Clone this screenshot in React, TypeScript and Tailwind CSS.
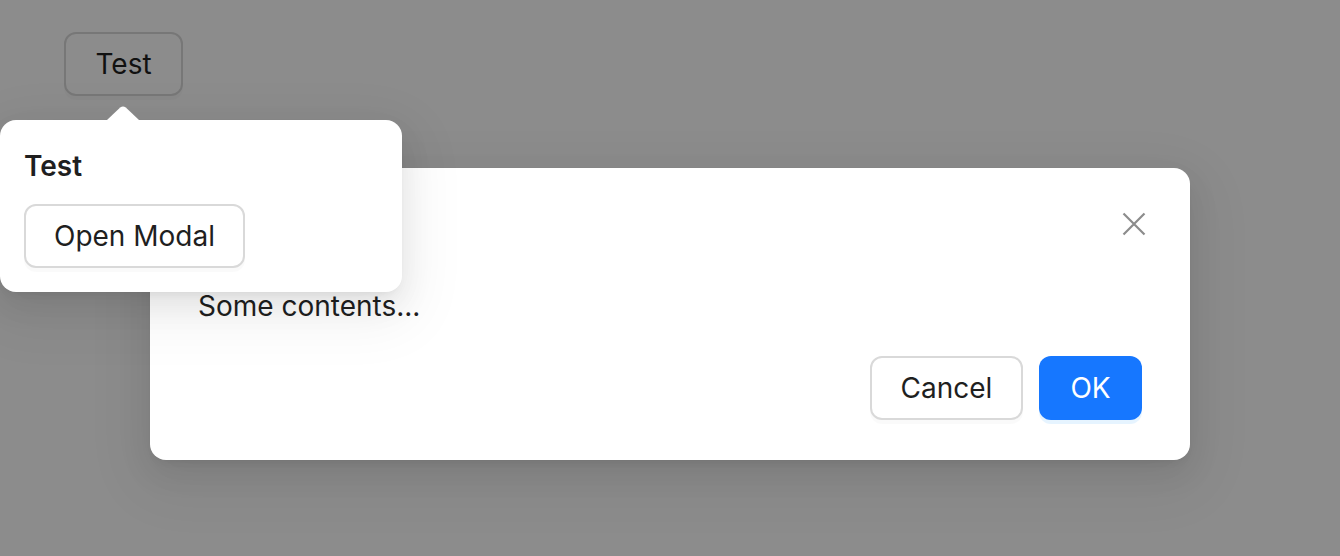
import React from "react";

export default function App() {
  return (
    <div
      className="relative w-[1340px] h-[556px] overflow-hidden bg-white text-[#1f1f1f]"
      style={{ fontFamily: "Inter, 'Noto Sans', sans-serif" }}
    >
      <div className="pt-[32px] pl-[64px]">
        <button className="w-[119px] h-[64px] rounded-[12px] border-2 border-[#d9d9d9] bg-white text-[28px] leading-[44px] shadow-[0_4px_0_rgba(0,0,0,0.02)]">
          Test
        </button>
      </div>

      {/* mask */}
      <div className="absolute inset-0 bg-black/45" />

      {/* modal */}
      <div className="absolute left-[150px] top-[168px] w-[1040px] rounded-[16px] bg-white pt-[40px] pb-[40px] px-[48px] shadow-[0_12px_32px_0_rgba(0,0,0,0.08),0_6px_12px_-8px_rgba(0,0,0,0.12),0_18px_56px_16px_rgba(0,0,0,0.05)]">
        <button className="absolute top-[34px] right-[34px] w-[44px] h-[44px] flex items-center justify-center text-[#8c8c8c]">
          <svg width="24" height="24" viewBox="0 0 24 24" fill="none">
            <path d="M1.5 1.5 L22.5 22.5 M22.5 1.5 L1.5 22.5" stroke="currentColor" strokeWidth="2.2" />
          </svg>
        </button>
        <div className="h-[76px]" />
        <div className="text-[28px] leading-[44px]">Some contents...</div>
        <div className="mt-[28px] flex justify-end gap-[16px]">
          <button className="w-[153px] h-[64px] rounded-[12px] border-2 border-[#d9d9d9] bg-white text-[28px] leading-[44px] shadow-[0_4px_0_rgba(0,0,0,0.02)]">
            Cancel
          </button>
          <button className="w-[103px] h-[64px] rounded-[12px] bg-[#1677ff] text-white text-[28px] leading-[44px] shadow-[0_4px_0_rgba(5,145,255,0.1)]">
            OK
          </button>
        </div>
      </div>

      {/* popover */}
      <div className="absolute left-0 top-[106px]">
        <svg className="ml-[107px] block" width="32" height="14" viewBox="0 0 32 14">
          <path d="M0 14 L13.2 1.6 Q16 -0.8 18.8 1.6 L32 14 Z" fill="#ffffff" />
        </svg>
        <div className="w-[402px] rounded-[16px] bg-white p-[24px] shadow-[0_12px_32px_0_rgba(0,0,0,0.08),0_6px_12px_-8px_rgba(0,0,0,0.12),0_18px_56px_16px_rgba(0,0,0,0.05)]">
          <div className="text-[28px] leading-[44px] font-semibold mb-[16px]">Test</div>
          <button className="w-[221px] h-[64px] rounded-[12px] border-2 border-[#d9d9d9] bg-white text-[28px] leading-[44px] shadow-[0_4px_0_rgba(0,0,0,0.02)]">
            Open Modal
          </button>
        </div>
      </div>
    </div>
  );
}
